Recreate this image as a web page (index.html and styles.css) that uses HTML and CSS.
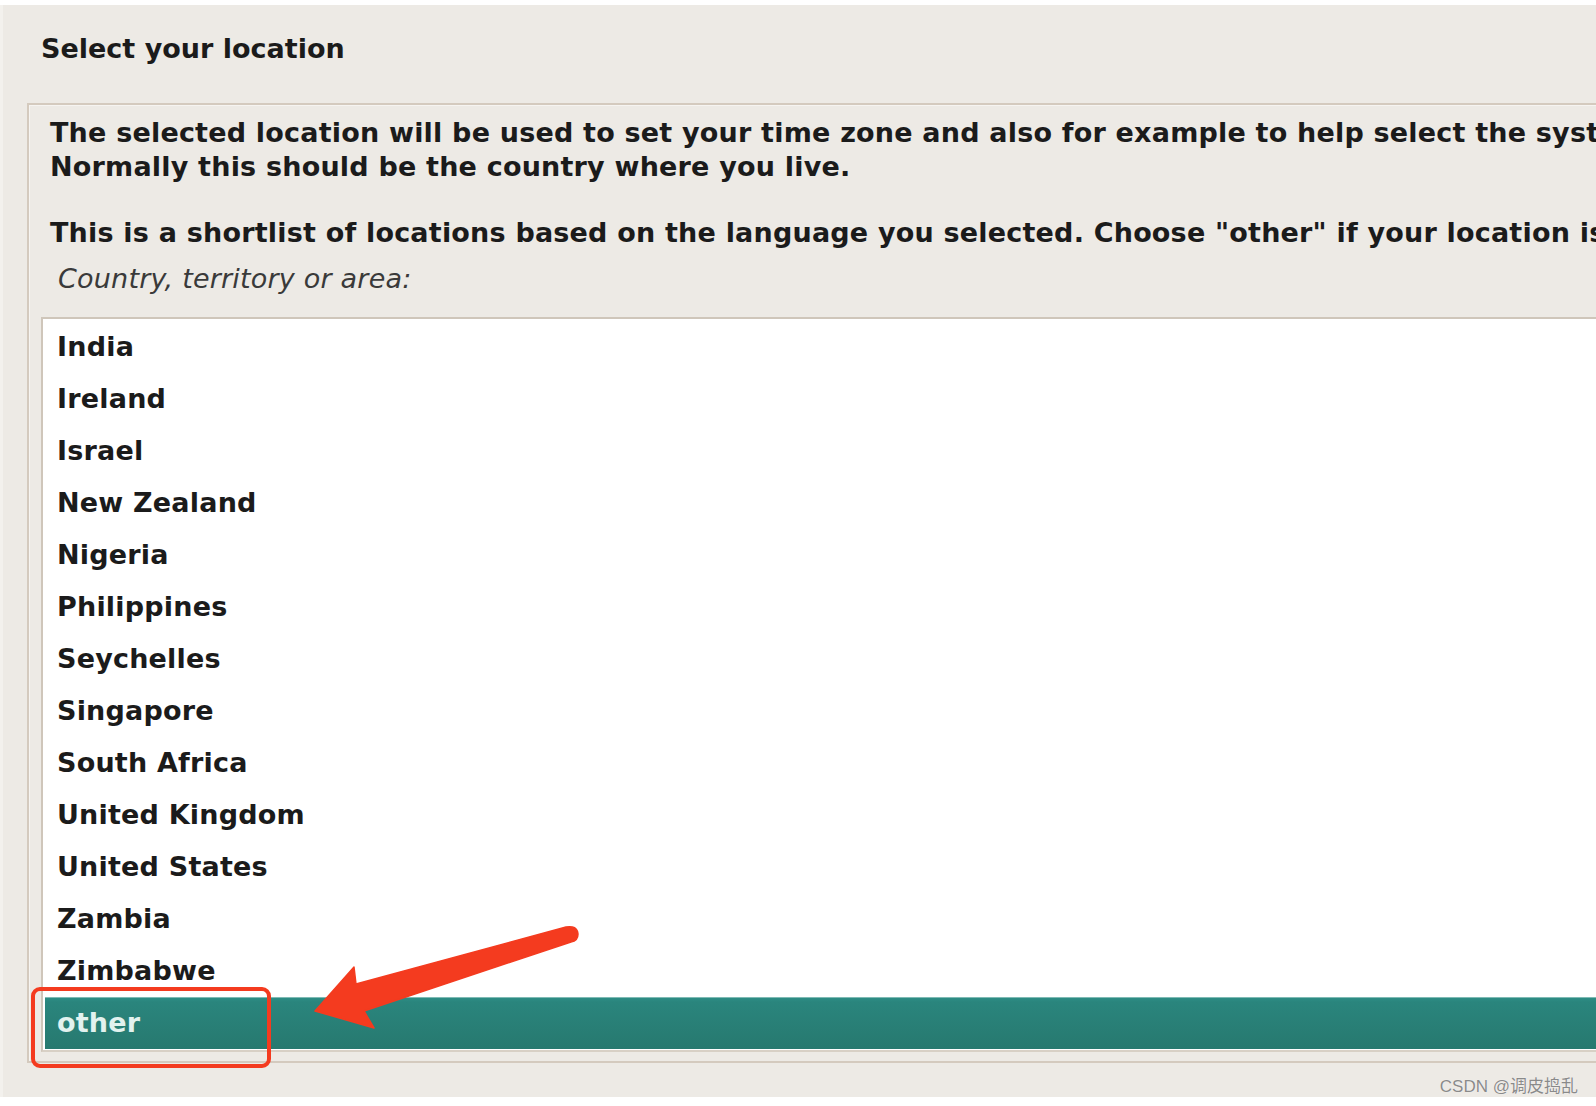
FILE: index.html
```html
<!DOCTYPE html>
<html lang="en">
<head>
<meta charset="utf-8">
<title>Select your location</title>
<link rel="stylesheet" href="styles.css">
</head>
<body>
<div class="window">
  <div class="title">Select your location</div>
  <div class="frame">
    <p class="msg">The selected location will be used to set your time zone and also for example to help select the system locale.<br>Normally this should be the country where you live.</p>
    <p class="msg second">This is a shortlist of locations based on the language you selected. Choose "other" if your location is not listed.</p>
    <div class="label">Country, territory or area:</div>
    <ul class="list">
      <li>India</li>
      <li>Ireland</li>
      <li>Israel</li>
      <li>New Zealand</li>
      <li>Nigeria</li>
      <li>Philippines</li>
      <li>Seychelles</li>
      <li>Singapore</li>
      <li>South Africa</li>
      <li>United Kingdom</li>
      <li>United States</li>
      <li>Zambia</li>
      <li>Zimbabwe</li>
      <li class="selected">other</li>
    </ul>
  </div>
</div>
<div class="highlight-box"></div>
<svg class="arrow" width="1596" height="1106" viewBox="0 0 1596 1106" xmlns="http://www.w3.org/2000/svg">
  <path d="M315 1011 L354 967 L356 984 L566 927 Q577 925 578 934 Q578 941 571 942 L364 1011 L374 1028 Z" fill="#f43b1f" stroke="#f43b1f" stroke-width="1.5" stroke-linejoin="round"/>
</svg>
<div class="watermark">CSDN @调皮捣乱</div>
</body>
</html>
```

FILE: styles.css
```css
html, body {
  margin: 0;
  padding: 0;
  background: #ffffff;
  width: 1596px;
  height: 1106px;
  overflow: hidden;
}

body {
  position: relative;
  font-family: "DejaVu Sans", "Liberation Sans", sans-serif;
  color: #1b1b1b;
}

.window {
  margin-top: 5px;
  height: 1092px;
  box-sizing: border-box;
  background: #edeae5;
  border-left: 3px solid #f3f1ed;
  padding: 27px 0 0 24px;
  overflow: hidden;
}

.title {
  font-weight: bold;
  font-size: 27px;
  line-height: 34px;
  margin-left: 14px;
  white-space: nowrap;
}

.frame {
  margin-top: 37px;
  width: 1700px;
  height: 960px;
  box-sizing: border-box;
  border-top: 2px solid #d4cabe;
  border-left: 2px solid #d4cabe;
  border-bottom: 2px solid #d4cabe;
  box-shadow: inset 1px 1px 0 #f6f4f1;
  padding: 11px 0 0 12px;
}

.msg {
  margin: 0;
  padding-left: 9px;
  font-weight: bold;
  font-size: 27px;
  letter-spacing: 0.2px;
  line-height: 34px;
  white-space: nowrap;
}

.second {
  margin-top: 32px;
}

.label {
  margin-top: 12px;
  padding-left: 17px;
  font-style: italic;
  font-size: 27px;
  letter-spacing: 0.2px;
  line-height: 34px;
  color: #3a3a3a;
  white-space: nowrap;
}

.list {
  list-style: none;
  margin: 21px 0 0 0;
  padding: 2px 0 1px 2px;
  background: #ffffff;
  border-top: 2px solid #cfc6ba;
  border-left: 2px solid #cfc6ba;
  border-bottom: 2px solid #d8d0c5;
}

.list li {
  height: 52px;
  line-height: 52px;
  padding-left: 12px;
  font-weight: bold;
  font-size: 27px;
  letter-spacing: 0.2px;
  white-space: nowrap;
}

.list li.selected {
  background: linear-gradient(#2e8d85 0%, #2a857d 8%, #27796f 100%);
  border-top: 1px solid #7fbab4;
  height: 51px;
  line-height: 50px;
  color: #e2f2ef;
}

.highlight-box {
  position: absolute;
  left: 31px;
  top: 987px;
  width: 240px;
  height: 81px;
  box-sizing: border-box;
  border: 4px solid #f43b1f;
  border-radius: 9px;
}

.arrow {
  position: absolute;
  left: 0;
  top: 0;
}

.watermark {
  position: absolute;
  right: 18px;
  top: 1076px;
  font-family: "Liberation Sans", "Noto Sans CJK SC", sans-serif;
  font-size: 17px;
  line-height: 22px;
  color: #8a8a8a;
  text-shadow: 0 0 1px #ffffff;
  white-space: nowrap;
}
```
